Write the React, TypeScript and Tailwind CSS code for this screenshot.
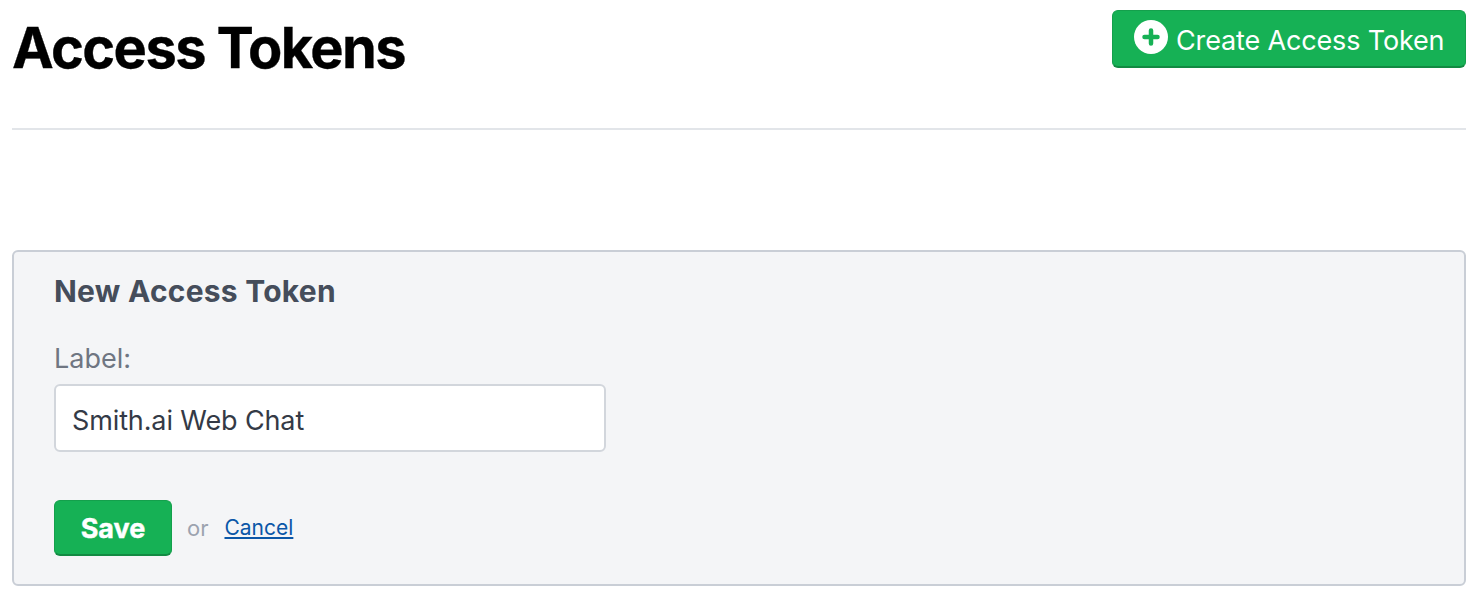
import React from 'react';

const font = "font-['Inter','Liberation_Sans',sans-serif]";

export default function App() {
    return (
        <div className={`${font} bg-white h-[598px] overflow-hidden pl-3 pr-2 pt-[10px]`}>
            {/* Header */}
            <div className="flex items-start justify-between h-[120px] border-b-2 border-[#e2e5e9]">
                <h1 className="text-[56px] leading-[76px] font-bold text-black tracking-[-1.6px] [-webkit-text-stroke:0.3px_#000]">Access Tokens</h1>
                <button className="flex items-center gap-[8px] h-[58px] w-[354px] pl-[21px] bg-[#16b155] border border-[#14a04c] border-b-2 border-b-[#128a42] rounded-[6px] text-white text-[27px] tracking-[-0.15px]">
                    <svg width="34" height="34" viewBox="0 0 34 34" className="-mt-[3px]">
                        <circle cx="17" cy="17" r="17" fill="#fff" />
                        <path d="M17 10.5v13M10.5 17h13" stroke="#16b155" strokeWidth="4.5" strokeLinecap="round" />
                    </svg>
                    <span className="pt-[6px]">Create Access Token</span>
                </button>
            </div>

            {/* Form panel */}
            <div className="mt-[120px] h-[336px] bg-[#f4f5f7] border-2 border-[#c9ced6] rounded-[6px] pl-[40px] pt-[21px]">
                <h2 className="text-[30px] leading-[36px] font-bold text-[#454d5b] tracking-[0.25px]">New Access Token</h2>
                <label className="block mt-[34px] text-[27px] leading-[32px] text-[#6f7682]">Label:</label>
                <input
                    type="text"
                    defaultValue="Smith.ai Web Chat"
                    className="block mt-[9px] w-[552px] h-[68px] pl-[16px] pt-[4px] bg-white border-2 border-[#d2d6dc] rounded-[6px] text-[27px] text-[#343a46] tracking-[-0.12px]"
                />
                <div className="flex items-center mt-[48px]">
                    <button className="w-[118px] h-[56px] pt-[3px] bg-[#16b155] border border-[#14a04c] border-b-2 border-b-[#128a42] rounded-[6px] text-white text-[27px] font-bold [-webkit-text-stroke:0.4px_#fff]">Save</button>
                    <span className="ml-[15px] text-[22px] text-[#9ca3af]">or</span>
                    <a href="#" className="ml-[16px] text-[21px] text-[#0b57a8] underline">Cancel</a>
                </div>
            </div>
        </div>
    );
}
